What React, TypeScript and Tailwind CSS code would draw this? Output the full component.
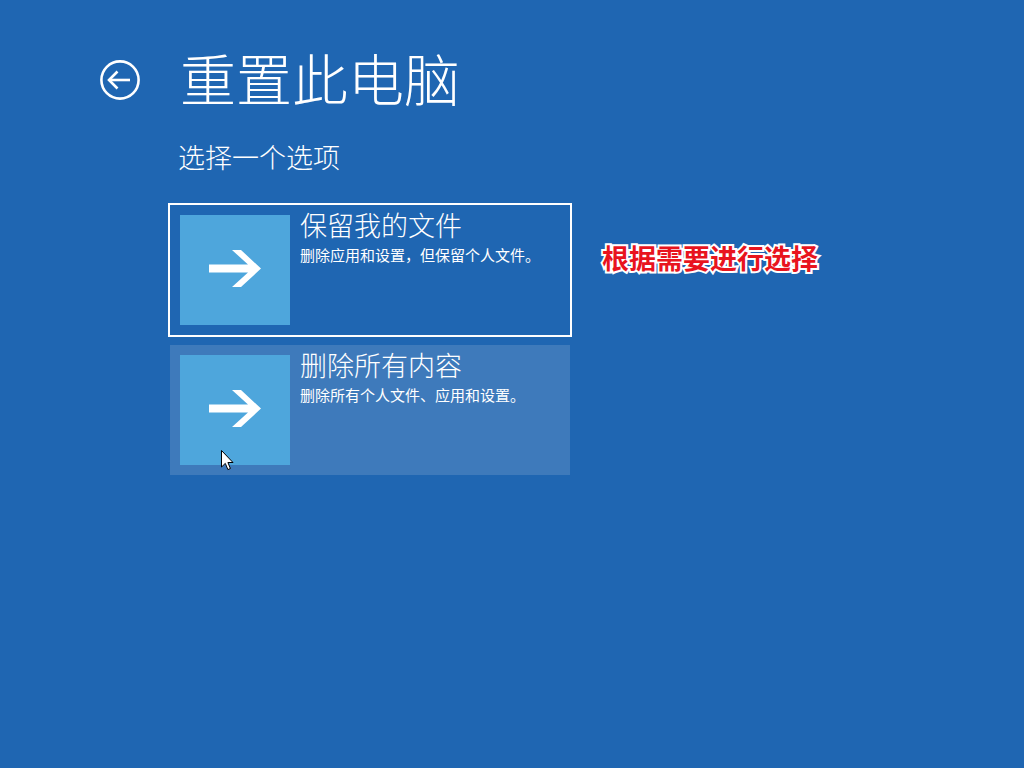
import React from "react";

const FONT = '"Noto Sans CJK SC", "Noto Sans", sans-serif';

function BackIcon() {
  return (
    <svg width="40" height="40" viewBox="0 0 40 40" fill="none">
      <circle cx="20" cy="20" r="18.6" stroke="white" strokeWidth="2.6" />
      <path d="M9 20H30" stroke="white" strokeWidth="2.6" />
      <path d="M17.5 11.5L9 20L17.5 28.5" stroke="white" strokeWidth="2.6" />
    </svg>
  );
}

function ArrowTile() {
  return (
    <div className="w-[110px] h-[110px] shrink-0 bg-[#4ea6dc]">
      <svg width="110" height="110" viewBox="0 0 110 110">
        <polygon
          points="29,49.5 68,49.5 52,35 61,35 81,53.5 61,72 52,72 68,57.5 29,57.5"
          fill="white"
        />
      </svg>
    </div>
  );
}

type OptionProps = {
  title: string;
  desc: string;
};

function OptionBody({ title, desc }: OptionProps) {
  return (
    <div className="flex gap-[10px]">
      <ArrowTile />
      <div className="-mt-[4px] text-white">
        <div className="text-[27px] leading-none font-light">{title}</div>
        <div className="mt-[9px] text-[15px] leading-none">{desc}</div>
      </div>
    </div>
  );
}

function Cursor() {
  return (
    <svg width="14" height="22" viewBox="0 0 14 22" className="absolute left-[221px] top-[450px]">
      <path
        d="M0.5 0.5V17L4.3 13.4L6.9 19.6L9.4 18.5L6.9 12.5H12L0.5 0.5Z"
        fill="white"
        stroke="black"
        strokeWidth="1"
        strokeLinejoin="miter"
      />
    </svg>
  );
}

export default function App() {
  return (
    <div
      className="relative w-[1024px] h-[768px] overflow-hidden bg-[#1f66b2] pl-[100px] pt-[49px] text-white"
      style={{ fontFamily: FONT }}
    >
      <div className="flex items-start">
        <div className="w-[80px] mt-[11px]">
          <BackIcon />
        </div>
        <h1 className="text-[56px] leading-none font-light">重置此电脑</h1>
      </div>

      <div className="ml-[78px] mt-[38px] text-[27px] leading-none font-light">选择一个选项</div>

      <div className="ml-[68px] mt-[33px] w-[404px] h-[134px] border-2 border-white p-[10px]">
        <OptionBody title="保留我的文件" desc="删除应用和设置，但保留个人文件。" />
      </div>

      <div className="ml-[70px] mt-[8px] w-[400px] h-[130px] bg-[#3e7abb] p-[10px]">
        <OptionBody title="删除所有内容" desc="删除所有个人文件、应用和设置。" />
      </div>

      <div
        className="absolute left-[602px] top-[244px] text-[27px] leading-none font-bold text-[#e8141e] [paint-order:stroke_fill] [-webkit-text-stroke:4px_white]"
      >
        根据需要进行选择
      </div>

      <Cursor />
    </div>
  );
}
